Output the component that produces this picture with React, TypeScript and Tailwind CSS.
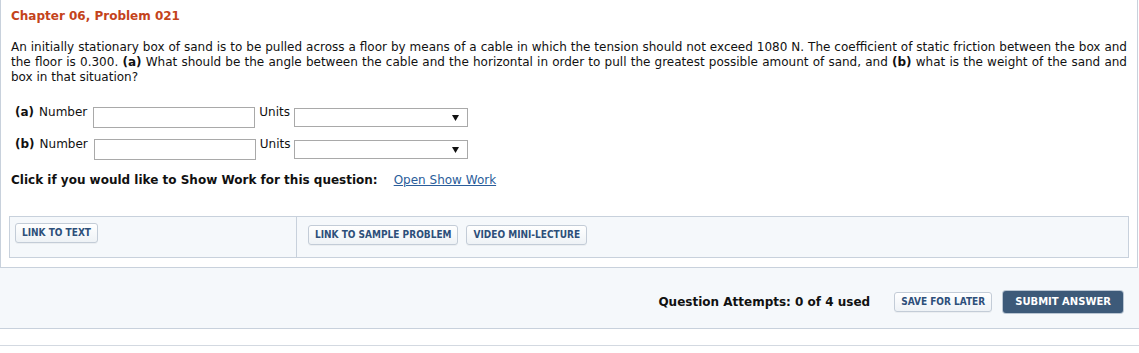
import React from "react";

const smallBtn =
  "h-[20px] px-[6px] rounded-[3px] border border-[#c3ccd7] bg-gradient-to-b from-white to-[#eef2f6] text-[10px] font-bold text-[#2d4f7a] leading-[18px] font-['DejaVu_Sans_Condensed','DejaVu_Sans',sans-serif] font-stretch-condensed shadow-[0_1px_0_rgba(0,0,0,0.04)]";

function SelectBox() {
  return (
    <div className="relative mt-[3px] ml-[4px] w-[174px] h-[19px] border border-[#a9a9a9] bg-white">
      <svg className="absolute right-[8px] top-[6px]" width="7" height="6" viewBox="0 0 7 6">
        <path d="M0 0 H7 L3.5 6 Z" fill="#111" />
      </svg>
    </div>
  );
}

function Row({ label }: { label: string }) {
  return (
    <div className="flex items-start pl-[4px] leading-[15px]">
      <span className="font-bold">{label}</span>
      <span className="ml-[5px]">Number</span>
      <div className="mt-[2px] ml-[6px] w-[162px] h-[21px] border border-[#a9a9a9] bg-white" />
      <span className="ml-[4px]">Units</span>
      <SelectBox />
    </div>
  );
}

export default function App() {
  return (
    <div className="w-[1139px] h-[353px] bg-white text-[12px] text-[#111] font-['DejaVu_Sans',sans-serif]">
      <div className="box-border h-[268px] w-[1138px] border-l border-r border-b border-[#c8d1dc] px-[10px] pt-[9px]">
        <div className="font-bold text-[#c4431b] leading-[15px]">Chapter 06, Problem 021</div>
        <p className="mt-[16px] leading-[15px] text-justify">
          An initially stationary box of sand is to be pulled across a floor by means of a cable in which the tension
          should not exceed 1080 N. The coefficient of static friction between the box and the floor is 0.300.{" "}
          <b>(a)</b> What should be the angle between the cable and the horizontal in order to pull the greatest
          possible amount of sand, and <b>(b)</b> what is the weight of the sand and box in that situation?
        </p>
        <div className="mt-[20px]">
          <Row label="(a)" />
        </div>
        <div className="mt-[9px]">
          <Row label="(b)" />
        </div>
        <div className="mt-[13px] flex leading-[15px]">
          <span className="font-bold">Click if you would like to Show Work for this question:</span>
          <span className="ml-[16px] text-[#2a5d9a] underline">Open Show Work</span>
        </div>
        <div className="mt-[28px] ml-[-2px] flex h-[42px] w-[1120px] border border-[#c8d1dc] bg-[#f5f8fb]">
          <div className="w-[287px] border-r border-[#c8d1dc] pl-[5px] pt-[6px]">
            <button className={smallBtn}>LINK TO TEXT</button>
          </div>
          <div className="flex items-start gap-[8px] pl-[11px] pt-[8px]">
            <button className={smallBtn}>LINK TO SAMPLE PROBLEM</button>
            <button className={smallBtn}>VIDEO MINI-LECTURE</button>
          </div>
        </div>
      </div>
      <div className="box-border flex h-[61px] items-start justify-end border-b border-[#c8d1dc] bg-[#f5f8fb] pr-[16px] pt-[23px]">
        <span className="mt-[3px] font-bold text-[12px] leading-[16px] text-[#111]">Question Attempts: 0 of 4 used</span>
        <button className={smallBtn + " ml-[24px] mt-[1px]"}>SAVE FOR LATER</button>
        <button className="ml-[11px] h-[22px] px-[12px] rounded-[3px] bg-[#3d5a79] ring-1 ring-[#b9c5d2] text-[10px] font-bold text-white leading-[22px] font-['DejaVu_Sans',sans-serif]">
          SUBMIT ANSWER
        </button>
      </div>
      <div className="h-[16px]" />
      <div className="border-t border-[#d3d9e1]" />
    </div>
  );
}
